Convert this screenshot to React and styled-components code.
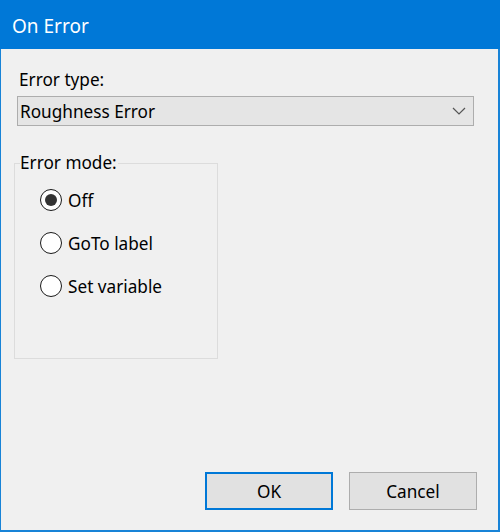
import React from "react";
import styled, { createGlobalStyle } from "styled-components";

const Global = createGlobalStyle`
  html, body { margin: 0; padding: 0; background: #f0f0f0; }
  body { font-family: "Noto Sans", "Open Sans", sans-serif; }
  * { box-sizing: border-box; }
`;

const Window = styled.div`
  width: 500px;
  height: 532px;
  display: flex;
  flex-direction: column;
  border: 1px solid #1883d7;
  border-top: none;
  border-right-width: 2px;
  border-bottom-width: 2px;
  background: #f0f0f0;
  color: #000;
`;

const TitleBar = styled.div`
  height: 49px;
  margin: 0 -2px 0 -1px;
  background: #0078d7;
  color: #fff;
  font-size: 19px;
  display: flex;
  align-items: center;
  padding: 2px 0 0 12px;
  flex-shrink: 0;
`;

const Body = styled.div`
  flex: 1;
  display: flex;
  flex-direction: column;
  padding: 19px 21px 20px 13px;
`;

const Label = styled.div`
  font-size: 17.2px;
  line-height: 23px;
  padding-left: 5px;
`;

const Combo = styled.div`
  margin: 5px 0 0 3px;
  width: 457px;
  height: 30px;
  background: #e5e5e5;
  border: 1px solid #adadad;
  display: flex;
  align-items: center;
  justify-content: space-between;
  padding: 0 6px 0 2px;
  font-size: 17.2px;
`;

const Group = styled.fieldset`
  margin: 27px 0 0 0;
  padding: 0;
  width: 204px;
  height: 206px;
  border: 1px solid #dcdcdc;
  border-radius: 0;
`;

const Legend = styled.legend`
  font-size: 17.2px;
  line-height: 20px;
  padding: 0 1px 0 0;
  margin-left: 5px;
`;

const RadioList = styled.div`
  display: flex;
  flex-direction: column;
  gap: 15px;
  padding: 13px 0 0 25px;
`;

const RadioRow = styled.label`
  display: flex;
  align-items: center;
  gap: 6px;
  height: 28px;
  font-size: 17.2px;
`;

const RadioCircle = styled.span`
  width: 22px;
  height: 22px;
  border-radius: 50%;
  border: 1.5px solid #1a1a1a;
  background: #fff;
  display: flex;
  align-items: center;
  justify-content: center;
  &::after {
    content: "";
    width: 12px;
    height: 12px;
    border-radius: 50%;
    background: #333;
    display: ${(p) => (p.$checked ? "block" : "none")};
  }
`;

const Spacer = styled.div`
  flex: 1;
`;

const Buttons = styled.div`
  display: flex;
  justify-content: flex-end;
  gap: 16px;
`;

const Button = styled.div`
  width: 128px;
  height: 38px;
  display: flex;
  align-items: center;
  justify-content: center;
  background: #e1e1e1;
  border: ${(p) => (p.$default ? "2px solid #0078d7" : "1px solid #adadad")};
  font-size: 17.2px;
`;

export default function App() {
  return (
    <>
      <Global />
      <Window>
        <TitleBar>On Error</TitleBar>
        <Body>
          <Label>Error type:</Label>
          <Combo>
            <span>Roughness Error</span>
            <svg width="16" height="10" viewBox="0 0 16 10">
              <path d="M2 2 L8 8 L14 2" fill="none" stroke="#555" strokeWidth="1.2" />
            </svg>
          </Combo>
          <Group>
            <Legend>Error mode:</Legend>
            <RadioList>
              <RadioRow>
                <RadioCircle $checked />
                Off
              </RadioRow>
              <RadioRow>
                <RadioCircle />
                GoTo label
              </RadioRow>
              <RadioRow>
                <RadioCircle />
                Set variable
              </RadioRow>
            </RadioList>
          </Group>
          <Spacer />
          <Buttons>
            <Button $default>OK</Button>
            <Button>Cancel</Button>
          </Buttons>
        </Body>
      </Window>
    </>
  );
}
